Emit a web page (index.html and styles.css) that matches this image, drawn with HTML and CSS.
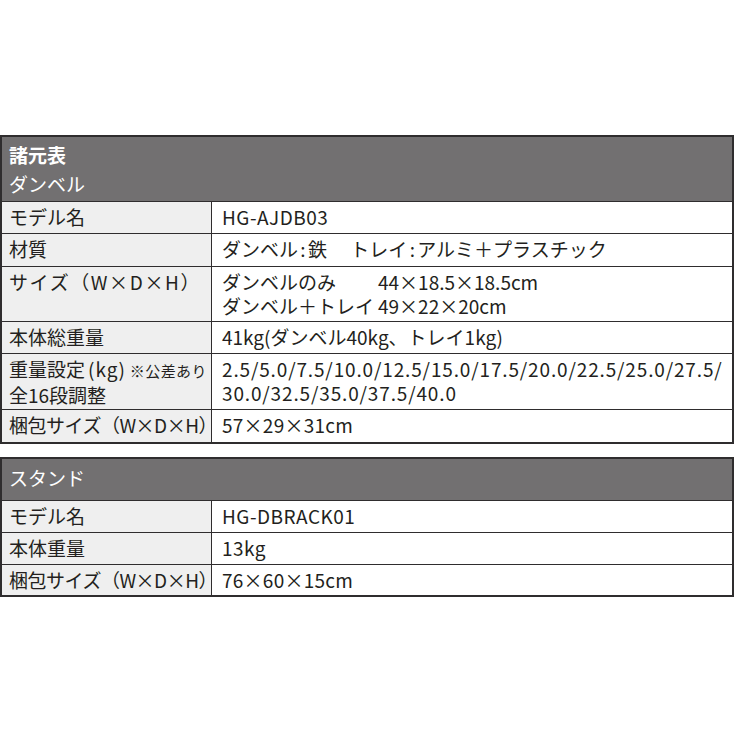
FILE: index.html
```html
<!DOCTYPE html>
<html lang="ja">
<head>
<meta charset="utf-8">
<link rel="stylesheet" href="styles.css">
</head>
<body>
<div class="page">
  <div class="spec">
    <div class="head">
      <div class="title">諸元表</div>
      <div class="sub">ダンベル</div>
    </div>
    <div class="row">
      <div class="label">モデル名</div>
      <div class="value"><span class="n">HG-AJDB03</span></div>
    </div>
    <div class="row r33">
      <div class="label">材質</div>
      <div class="value">ダンベル<span class="c">:</span>鉄　 トレイ<span class="c">:</span>アルミ＋プラスチック</div>
    </div>
    <div class="row two">
      <div class="label wide">サイズ（W×D×H）</div>
      <div class="value"><span class="k1">ダンベルのみ</span>44×18.5×18.5cm<br><span class="k1">ダンベル＋トレイ</span>49×22×20cm</div>
    </div>
    <div class="row">
      <div class="label">本体総重量</div>
      <div class="value">41kg(ダンベル40kg、トレイ1kg)</div>
    </div>
    <div class="row two r56">
      <div class="label">重量設定<span class="kg">(kg)</span><span class="note">※公差あり</span><br>全16段調整</div>
      <div class="value"><span class="n nums">2.5/5.0/7.5/10.0/12.5/15.0/17.5/20.0/22.5/25.0/27.5/</span><br><span class="n nums">30.0/32.5/35.0/37.5/40.0</span></div>
    </div>
    <div class="row last">
      <div class="label narrow">梱包サイズ（W×D×H）</div>
      <div class="value"><span class="s">57×29×31cm</span></div>
    </div>
  </div>

  <div class="spec">
    <div class="head single">
      <div class="sub">スタンド</div>
    </div>
    <div class="row">
      <div class="label">モデル名</div>
      <div class="value"><span class="n">HG-DBRACK01</span></div>
    </div>
    <div class="row">
      <div class="label">本体重量</div>
      <div class="value"><span class="n">13kg</span></div>
    </div>
    <div class="row last r30">
      <div class="label narrow">梱包サイズ（W×D×H）</div>
      <div class="value"><span class="s">76×60×15cm</span></div>
    </div>
  </div>
</div>
</body>
</html>
```

FILE: styles.css
```css
html, body {
  margin: 0;
  padding: 0;
  background: #ffffff;
}
body {
  font-family: "Noto Sans CJK JP", "Noto Sans", sans-serif;
  color: #231f20;
  font-size: 19px;
}
.page {
  padding-top: 135px;
  display: flex;
  flex-direction: column;
  gap: 13px;
  width: 735px;
}
.spec {
  border: 2px solid #2f2d2e;
  width: 734px;
  box-sizing: border-box;
}
.head {
  background: #727071;
  color: #ffffff;
  padding: 3px 7px 5px;
  height: 65px;
  box-sizing: border-box;
  border-bottom: 1px solid #2f2d2e;
  line-height: 29px;
}
.head.single {
  height: 42px;
  padding-top: 4px;
}
.title {
  font-weight: 700;
}
.row {
  display: grid;
  grid-template-columns: 210px 1fr;
  border-bottom: 1px solid #2f2d2e;
  height: 32px;
  box-sizing: border-box;
}
.row.r33 {
  height: 33px;
}
.row.two {
  height: 55px;
}
.row.two.r56 {
  height: 56px;
}
.row.r30 {
  height: 30px;
}
.row.last {
  border-bottom: none;
}
.label {
  background: #efefef;
  border-right: 1px solid #2f2d2e;
  padding: 3px 0 0 7px;
  line-height: 24px;
  white-space: nowrap;
}
.label.wide {
  letter-spacing: 1.6px;
}
.label.narrow {
  letter-spacing: -0.5px;
}
.value {
  background: #ffffff;
  padding: 3px 0 0 10px;
  line-height: 24px;
  white-space: nowrap;
}
.n {
  letter-spacing: 0.5px;
}
.n.nums {
  letter-spacing: 0.85px;
}
.s {
  letter-spacing: 0.25px;
}
.c {
  display: inline-block;
  width: 10px;
  text-align: center;
}
.kg {
  letter-spacing: 1px;
  margin: 0 4px 0 3px;
}
.note {
  font-size: 15px;
  letter-spacing: 0.4px;
}
.k1 {
  display: inline-block;
  width: 156px;
}
```
